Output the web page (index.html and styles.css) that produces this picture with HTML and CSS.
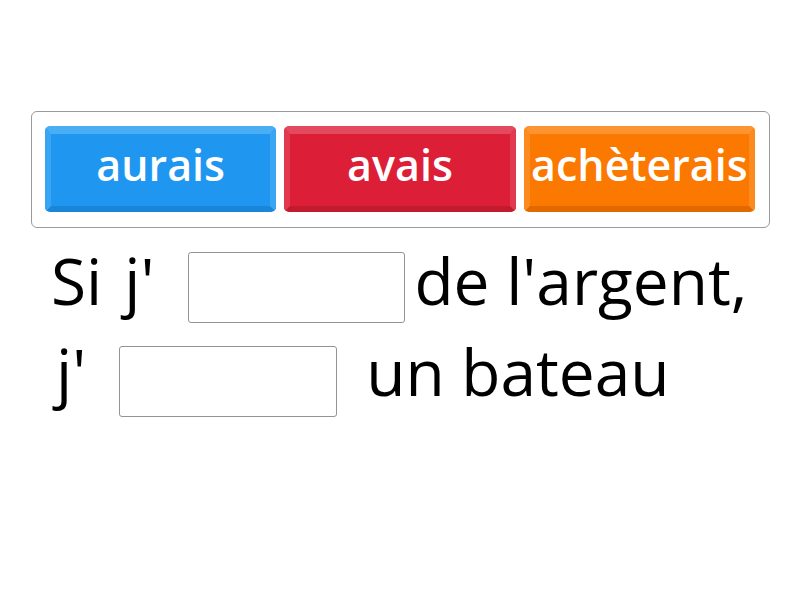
FILE: index.html
```html
<!DOCTYPE html>
<html lang="fr">
<head>
    <meta charset="UTF-8">
    <title>Compléter la phrase</title>
    <link rel="stylesheet" href="styles.css">
</head>
<body>
<div class="quiz">
    <div class="answers">
        <div class="tile blue">aurais</div>
        <div class="tile red">avais</div>
        <div class="tile orange">achèterais</div>
    </div>
    <div class="sentence">
        <div class="line first">
            <span class="word w-si">Si</span>
            <span class="word">j'</span>
            <span class="blank"></span>
            <span class="word after-tight">de l'argent,</span>
        </div>
        <div class="line">
            <span class="word w-j">j'</span>
            <span class="blank"></span>
            <span class="word after-wide">un bateau</span>
        </div>
    </div>
</div>
</body>
</html>
```

FILE: styles.css
```css
*{
    margin: 0;
    padding: 0;
    box-sizing: border-box;
}
body{
    background: #fff;
    font-family: "Open Sans", "Liberation Sans", sans-serif;
}
.quiz{
    padding-top: 111px;
    padding-left: 31px;
}
.answers{
    display: flex;
    gap: 8px;
    width: 739px;
    padding: 14px 14px 15px 13px;
    border: 1px solid #9a9a9a;
    border-radius: 6px;
}
.tile{
    flex: 1;
    height: 86px;
    display: flex;
    align-items: center;
    justify-content: center;
    padding-bottom: 12px;
    border-style: solid;
    border-width: 8px 6px 6px 6px;
    border-radius: 5px;
    color: #fff;
    font-size: 43px;
    font-weight: 600;
    white-space: nowrap;
}
.blue{
    background: #1f96ef;
    border-color: #4aaef5 #3aa5f3 #1a86d9 #3aa5f3;
}
.red{
    background: #dc1f37;
    border-color: #e44a5d #e13a50 #c21a2e #e13a50;
}
.orange{
    background: #fb7900;
    border-color: #fd9431 #fc8b1f #e06a00 #fc8b1f;
}
.sentence{
    margin-top: 9px;
    padding-left: 20px;
    font-size: 64px;
    color: #000;
}
.line{
    display: flex;
    align-items: flex-start;
    height: 91px;
}
.word{
    line-height: 87px;
    white-space: pre;
}
.blank{
    width: 218px;
    height: 71px;
    margin-top: 18px;
    margin-left: 33px;
    border: 1px solid #939393;
    border-radius: 3px;
}
.first .blank{ margin-top: 15px; margin-left: 34px; width: 217px; }
.w-si{ margin-right: 22px; }
.w-j{ margin-left: 5px; }
.after-tight{ margin-left: 9px; }
.after-wide{ margin-left: 29px; }
```
